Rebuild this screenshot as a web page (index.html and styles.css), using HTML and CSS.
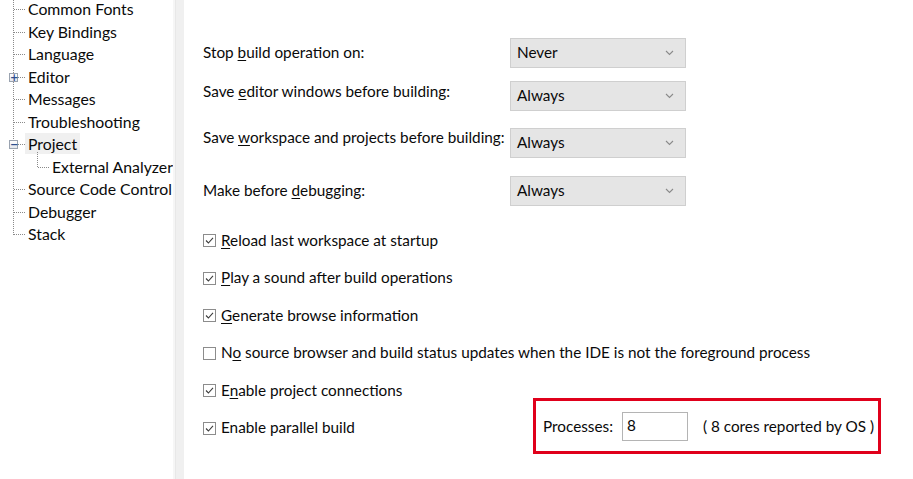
FILE: index.html
```html
<!DOCTYPE html>
<html>
<head>
<meta charset="utf-8">
<link rel="stylesheet" href="styles.css">
</head>
<body>
<div class="app">
  <aside class="tree">
    <ul class="tree-list">
      <li class="node"><div class="row"><span class="label">Common Fonts</span></div></li>
      <li class="node"><div class="row"><span class="label">Key Bindings</span></div></li>
      <li class="node"><div class="row"><span class="label">Language</span></div></li>
      <li class="node"><div class="row"><span class="toggle">+</span><span class="label">Editor</span></div></li>
      <li class="node"><div class="row"><span class="label">Messages</span></div></li>
      <li class="node"><div class="row"><span class="label">Troubleshooting</span></div></li>
      <li class="node">
        <div class="row"><span class="toggle">&minus;</span><span class="label selected">Project</span></div>
        <ul class="sub-list">
          <li class="node"><div class="row"><span class="label">External Analyzer</span></div></li>
        </ul>
      </li>
      <li class="node"><div class="row"><span class="label">Source Code Control</span></div></li>
      <li class="node"><div class="row"><span class="label">Debugger</span></div></li>
      <li class="node last"><div class="row"><span class="label">Stack</span></div></li>
    </ul>
  </aside>
  <div class="divider"></div>
  <main class="content">
    <div class="selects">
      <div class="field f1">
        <span class="field-label">Stop <u>b</u>uild operation on:</span>
        <div class="select"><span>Never</span><svg class="chev" width="9" height="6" viewBox="0 0 9 6"><path d="M1 1 L4.5 4.5 L8 1" fill="none" stroke="#8a8a8a" stroke-width="1.1"/></svg></div>
      </div>
      <div class="field f2">
        <span class="field-label raise">Save <u>e</u>ditor windows before building:</span>
        <div class="select"><span>Always</span><svg class="chev" width="9" height="6" viewBox="0 0 9 6"><path d="M1 1 L4.5 4.5 L8 1" fill="none" stroke="#8a8a8a" stroke-width="1.1"/></svg></div>
      </div>
      <div class="field f3">
        <span class="field-label raise2">Save <u>w</u>orkspace and projects before building:</span>
        <div class="select"><span>Always</span><svg class="chev" width="9" height="6" viewBox="0 0 9 6"><path d="M1 1 L4.5 4.5 L8 1" fill="none" stroke="#8a8a8a" stroke-width="1.1"/></svg></div>
      </div>
      <div class="field f4">
        <span class="field-label">Make before <u>d</u>ebugging:</span>
        <div class="select"><span>Always</span><svg class="chev" width="9" height="6" viewBox="0 0 9 6"><path d="M1 1 L4.5 4.5 L8 1" fill="none" stroke="#8a8a8a" stroke-width="1.1"/></svg></div>
      </div>
    </div>

    <div class="checks">
      <div class="check"><svg class="box" width="13" height="13" viewBox="0 0 13 13"><rect x="0.5" y="0.5" width="12" height="12" fill="#fff" stroke="#8c8c8c"/><path d="M3 6.5 L5.4 9 L10 3.8" fill="none" stroke="#3c3c3c" stroke-width="1.1"/></svg><span><u>R</u>eload last workspace at startup</span></div>
      <div class="check"><svg class="box" width="13" height="13" viewBox="0 0 13 13"><rect x="0.5" y="0.5" width="12" height="12" fill="#fff" stroke="#8c8c8c"/><path d="M3 6.5 L5.4 9 L10 3.8" fill="none" stroke="#3c3c3c" stroke-width="1.1"/></svg><span><u>P</u>lay a sound after build operations</span></div>
      <div class="check"><svg class="box" width="13" height="13" viewBox="0 0 13 13"><rect x="0.5" y="0.5" width="12" height="12" fill="#fff" stroke="#8c8c8c"/><path d="M3 6.5 L5.4 9 L10 3.8" fill="none" stroke="#3c3c3c" stroke-width="1.1"/></svg><span><u>G</u>enerate browse information</span></div>
      <div class="check"><svg class="box" width="13" height="13" viewBox="0 0 13 13"><rect x="0.5" y="0.5" width="12" height="12" fill="#fff" stroke="#8c8c8c"/></svg><span>N<u>o</u> source browser and build status updates when the IDE is not the foreground process</span></div>
      <div class="check"><svg class="box" width="13" height="13" viewBox="0 0 13 13"><rect x="0.5" y="0.5" width="12" height="12" fill="#fff" stroke="#8c8c8c"/><path d="M3 6.5 L5.4 9 L10 3.8" fill="none" stroke="#3c3c3c" stroke-width="1.1"/></svg><span>E<u>n</u>able project connections</span></div>
      <div class="check-row">
        <div class="check"><svg class="box" width="13" height="13" viewBox="0 0 13 13"><rect x="0.5" y="0.5" width="12" height="12" fill="#fff" stroke="#8c8c8c"/><path d="M3 6.5 L5.4 9 L10 3.8" fill="none" stroke="#3c3c3c" stroke-width="1.1"/></svg><span>Enable parallel build</span></div>
        <div class="procs">
          <span>Processes:</span>
          <div class="num-input">8</div>
          <span class="note">( 8 cores reported by OS )</span>
        </div>
      </div>
    </div>
  </main>
</div>
</body>
</html>
```

FILE: styles.css
```css
* { box-sizing: border-box; }
html, body {
  margin: 0;
  padding: 0;
  background: #fff;
  overflow: hidden;
}
body {
  font-family: "Lato", "Noto Sans", sans-serif;
  font-size: 15.3px;
  color: #0a0a0a;
  width: 913px;
  height: 479px;
}
u {
  text-decoration-thickness: 1px;
  text-underline-offset: 2px;
}
.app {
  display: flex;
  height: 479px;
}

/* Tree */
.tree {
  width: 173px;
  flex: none;
  overflow: hidden;
  white-space: nowrap;
  font-size: 15.8px;
}
.tree-list, .sub-list {
  list-style: none;
  margin: 0;
  padding: 0;
  position: relative;
}
.tree-list {
  margin-top: -2px;
}
.tree-list::before {
  content: "";
  position: absolute;
  left: 13px;
  top: 0;
  bottom: 11px;
  border-left: 1px dotted #8a8a8a;
}
.row {
  position: relative;
  height: 22.5px;
  line-height: 21px;
  padding-left: 28px;
}
.row::before {
  content: "";
  position: absolute;
  left: 14px;
  top: 11px;
  width: 11px;
  border-top: 1px dotted #8a8a8a;
}
.sub-list .row {
  padding-left: 52px;
}
.sub-list::before {
  content: "";
  position: absolute;
  left: 37px;
  top: -4px;
  height: 15px;
  border-left: 1px dotted #8a8a8a;
}
.sub-list .row::before {
  left: 38px;
  width: 11px;
}
.toggle {
  position: absolute;
  left: 9px;
  top: 7px;
  width: 9px;
  height: 9px;
  border: 1px solid #9aa3b0;
  background: linear-gradient(#ffffff, #e4e8ee);
  color: #2e4f8f;
  font-size: 10px;
  line-height: 7px;
  text-align: center;
  font-weight: bold;
  z-index: 1;
  font-family: "DejaVu Sans", sans-serif;
}
.label.selected {
  background: #f0f0f0;
  margin-left: -3px;
  padding: 0 3px;
  display: inline-block;
  height: 21px;
  line-height: 21px;
}

/* Divider */
.divider {
  width: 11px;
  flex: none;
  border-left: 2px solid #f6f6f6;
  background: linear-gradient(to right, #e8e8e8 0, #e8e8e8 1px, #f0f0f0 1px);
}

/* Content */
.content {
  flex: 1;
  padding: 38px 0 0 19px;
}
.selects {
  display: flex;
  flex-direction: column;
}
.field {
  display: flex;
  align-items: center;
}
.f2 { margin-top: 13px; }
.f3 { margin-top: 17px; }
.f4 { margin-top: 18px; }
.field-label {
  width: 307px;
  flex: none;
  white-space: nowrap;
  padding-bottom: 2px;
}
.field-label.raise { padding-bottom: 10px; }
.field-label.raise2 { padding-bottom: 12px; }
.select {
  width: 176px;
  height: 30px;
  background: #e5e5e5;
  border: 1px solid #cfcfcf;
  display: flex;
  align-items: center;
  justify-content: space-between;
  padding: 0 11px 2px 6px;
}
.chev { margin-top: 2px; }

.checks {
  margin-top: 23.5px;
  display: flex;
  flex-direction: column;
  gap: 15.5px;
}
.check {
  display: flex;
  align-items: center;
  height: 22px;
  gap: 5px;
  white-space: nowrap;
}
.check span { padding-bottom: 2px; }
.box { flex: none; }
.check-row {
  display: flex;
  align-items: center;
  height: 22px;
}
.check-row .check {
  width: 330px;
  flex: none;
}
.procs {
  flex: none;
  width: 348px;
  height: 56px;
  margin-top: -4px;
  border: 3px solid #e0001b;
  display: flex;
  align-items: center;
  padding-left: 7px;
  white-space: nowrap;
}
.num-input {
  margin-left: 9px;
  width: 66px;
  height: 29px;
  border: 1px solid #b4b4b4;
  padding: 0 0 0 4px;
  line-height: 24px;
}
.note { margin-left: 15px; }
```
